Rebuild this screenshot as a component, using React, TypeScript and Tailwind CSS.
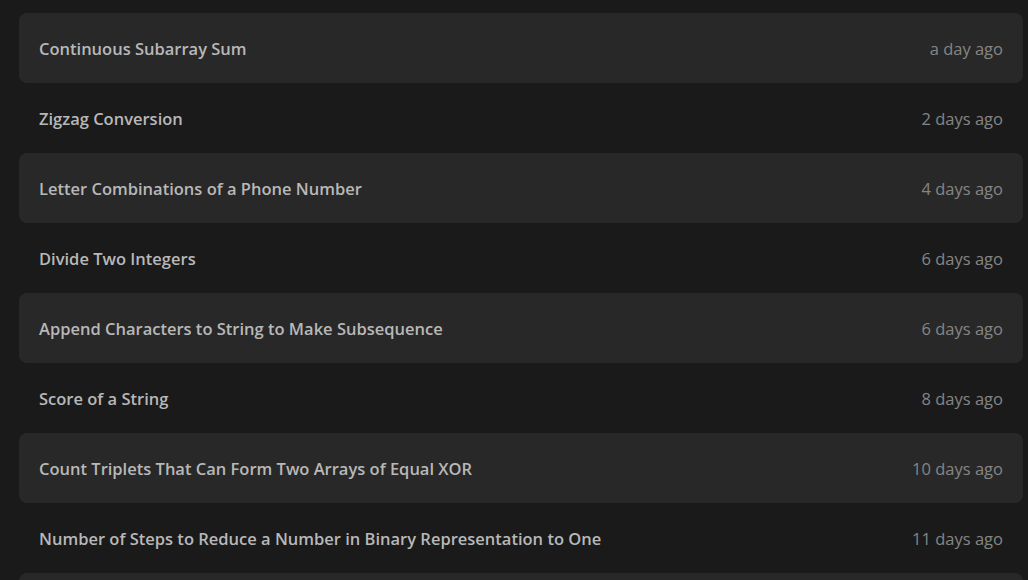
const items = [
  { title: "Continuous Subarray Sum", time: "a day ago" },
  { title: "Zigzag Conversion", time: "2 days ago" },
  { title: "Letter Combinations of a Phone Number", time: "4 days ago" },
  { title: "Divide Two Integers", time: "6 days ago" },
  { title: "Append Characters to String to Make Subsequence", time: "6 days ago" },
  { title: "Score of a String", time: "8 days ago" },
  { title: "Count Triplets That Can Form Two Arrays of Equal XOR", time: "10 days ago" },
  { title: "Number of Steps to Reduce a Number in Binary Representation to One", time: "11 days ago" },
];

export default function App() {
  return (
    <div
      className="h-[580px] overflow-hidden bg-[#1a1a1a] pl-[19px] pr-[5px] pt-[13px]"
      style={{ fontFamily: '"Open Sans", "Noto Sans", sans-serif' }}
    >
      <div className="flex flex-col">
        {items.map((item, i) => (
          <div
            key={i}
            className={`flex h-[70px] shrink-0 items-center justify-between rounded-lg px-5 pt-[2px] ${
              i % 2 === 0 ? "bg-[#282828]" : ""
            }`}
          >
            <span className="text-[16.5px] font-semibold text-[#b8b8b8]">{item.title}</span>
            <span className="text-[16.5px] text-[#858585]">{item.time}</span>
          </div>
        ))}
        {/* next row peeks in at the bottom */}
        <div className="h-[70px] shrink-0 rounded-lg bg-[#282828]" />
      </div>
    </div>
  );
}
